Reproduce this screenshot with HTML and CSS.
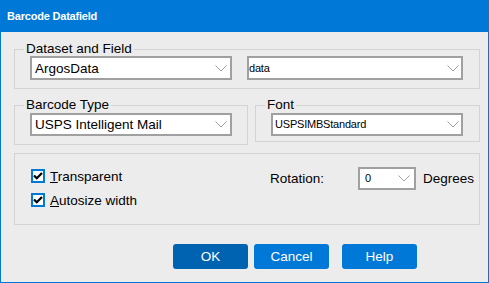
FILE: index.html
```html
<!DOCTYPE html>
<html>
<head>
<meta charset="utf-8">
<link rel="stylesheet" href="styles.css">
</head>
<body>
<div class="window">
  <div class="titlebar">Barcode Datafield</div>
  <div class="content">
    <div class="group group-1">
      <div class="legend">Dataset and Field</div>
      <div class="combo-row">
        <div class="combo combo-dataset"><span class="val">ArgosData</span><svg class="chev" width="12" height="7" viewBox="0 0 12 7"><polyline points="0.5,0.5 6,6 11.5,0.5" fill="none" stroke="#a3a3a3" stroke-width="1"/></svg></div>
        <div class="combo combo-field small"><span class="val">data</span><svg class="chev" width="12" height="7" viewBox="0 0 12 7"><polyline points="0.5,0.5 6,6 11.5,0.5" fill="none" stroke="#a3a3a3" stroke-width="1"/></svg></div>
      </div>
    </div>
    <div class="row-2">
      <div class="group group-type">
        <div class="legend">Barcode Type</div>
        <div class="combo combo-type"><span class="val">USPS Intelligent Mail</span><svg class="chev" width="12" height="7" viewBox="0 0 12 7"><polyline points="0.5,0.5 6,6 11.5,0.5" fill="none" stroke="#a3a3a3" stroke-width="1"/></svg></div>
      </div>
      <div class="group group-font">
        <div class="legend">Font</div>
        <div class="combo combo-font small"><span class="val">USPSIMBStandard</span><svg class="chev" width="12" height="7" viewBox="0 0 12 7"><polyline points="0.5,0.5 6,6 11.5,0.5" fill="none" stroke="#a3a3a3" stroke-width="1"/></svg></div>
      </div>
    </div>
    <div class="group group-3">
      <div class="checks">
        <div class="check-row"><span class="cb"><svg width="10" height="10" viewBox="0 0 10 10"><polyline points="1,4.5 3.8,7.3 9,2" fill="none" stroke="#000" stroke-width="2.2"/></svg></span><span class="lbl"><u>T</u>ransparent</span></div>
        <div class="check-row"><span class="cb"><svg width="10" height="10" viewBox="0 0 10 10"><polyline points="1,4.5 3.8,7.3 9,2" fill="none" stroke="#000" stroke-width="2.2"/></svg></span><span class="lbl"><u>A</u>utosize width</span></div>
      </div>
      <div class="rotation">
        <span class="rot-label">Rotation:</span>
        <div class="combo combo-rot small"><span class="val">0</span><svg class="chev" width="12" height="7" viewBox="0 0 12 7"><polyline points="0.5,0.5 6,6 11.5,0.5" fill="none" stroke="#a3a3a3" stroke-width="1"/></svg></div>
        <span class="deg">Degrees</span>
      </div>
    </div>
    <div class="buttons">
      <div class="btn btn-ok">OK</div>
      <div class="btn btn-cancel">Cancel</div>
      <div class="btn btn-help">Help</div>
    </div>
  </div>
</div>
</body>
</html>
```
FILE: styles.css
```css
html, body {
  margin: 0;
  padding: 0;
}
body {
  font-family: "Liberation Sans", Arial, sans-serif;
  font-size: 13.5px;
  color: #000;
}
.window {
  box-sizing: border-box;
  width: 489px;
  height: 283px;
  border: 1px solid #0078d7;
  border-top: none;
  background: #ececec;
  display: flex;
  flex-direction: column;
}
.titlebar {
  height: 32px;
  margin: 0 -1px;
  padding-left: 7px;
  background: #0078d7;
  color: #fff;
  font-weight: bold;
  font-size: 11px;
  letter-spacing: -0.2px;
  display: flex;
  align-items: center;
}
.content {
  padding: 0 8px 0 13px;
  display: flex;
  flex-direction: column;
}
.group {
  box-sizing: border-box;
  border: 1px solid #d3d3d3;
}
.legend {
  display: block;
  width: fit-content;
  margin: -9px 0 0 -6px;
  padding: 0 2px;
  line-height: 15px;
  background: #ececec;
}
.group-1 {
  margin-top: 17px;
  padding: 0 16px 8px 15px;
}
.combo-row {
  display: flex;
  gap: 15px;
}
.combo {
  box-sizing: border-box;
  height: 24px;
  border: 2px solid #a0a0a0;
  background: #fff;
  display: flex;
  align-items: center;
  padding: 0 3px 0 3px;
  line-height: 15px;
  white-space: nowrap;
}
.combo .val {
  flex: 1;
}
.combo .chev {
  display: block;
  flex: none;
}
.combo.small {
  font-size: 11px;
  letter-spacing: -0.2px;
}
.combo-dataset {
  width: 202px;
}
.combo-field {
  flex: 1;
  padding-left: 0;
  padding-right: 2px;
}
.row-2 {
  margin-top: 16px;
  display: flex;
  gap: 7px;
  align-items: flex-start;
}
.group-type {
  width: 234px;
  padding: 0 15px 8px 15px;
}
.group-font {
  width: 225px;
  padding: 0 16px 5px 15px;
}
.group-type .combo,
.group-font .combo {
  margin-top: 1px;
  height: 23px;
}
.combo-font {
  padding-left: 2px;
  padding-right: 2px;
}
.group-3 {
  margin-top: 8px;
  height: 72px;
  padding: 15px 0 0 16px;
  display: flex;
  align-items: flex-start;
}
.checks {
  width: 239px;
  display: flex;
  flex-direction: column;
  gap: 10px;
}
.check-row {
  display: flex;
  align-items: center;
  gap: 5px;
  height: 14px;
  line-height: 15px;
}
.cb {
  box-sizing: border-box;
  width: 14px;
  height: 14px;
  border: 2px solid #0078d7;
  background: #fff;
  display: flex;
  align-items: center;
  justify-content: center;
}
.cb svg {
  display: block;
}
.rotation {
  margin-top: -2px;
  display: flex;
  align-items: center;
  height: 23px;
}
.rot-label {
  width: 88px;
}
.combo-rot {
  width: 58px;
  height: 23px;
  padding-left: 5px;
  padding-right: 4px;
}
.deg {
  margin-left: 7px;
}
.buttons {
  margin-top: 19px;
  margin-left: 159px;
  display: flex;
}
.btn {
  box-sizing: border-box;
  width: 75px;
  height: 25px;
  border-radius: 3px;
  background: #0078d7;
  color: #fff;
  display: flex;
  align-items: center;
  justify-content: center;
}
.btn-ok {
  background: #0063b1;
}
.btn-cancel {
  margin-left: 6px;
}
.btn-help {
  margin-left: 13px;
}
```
